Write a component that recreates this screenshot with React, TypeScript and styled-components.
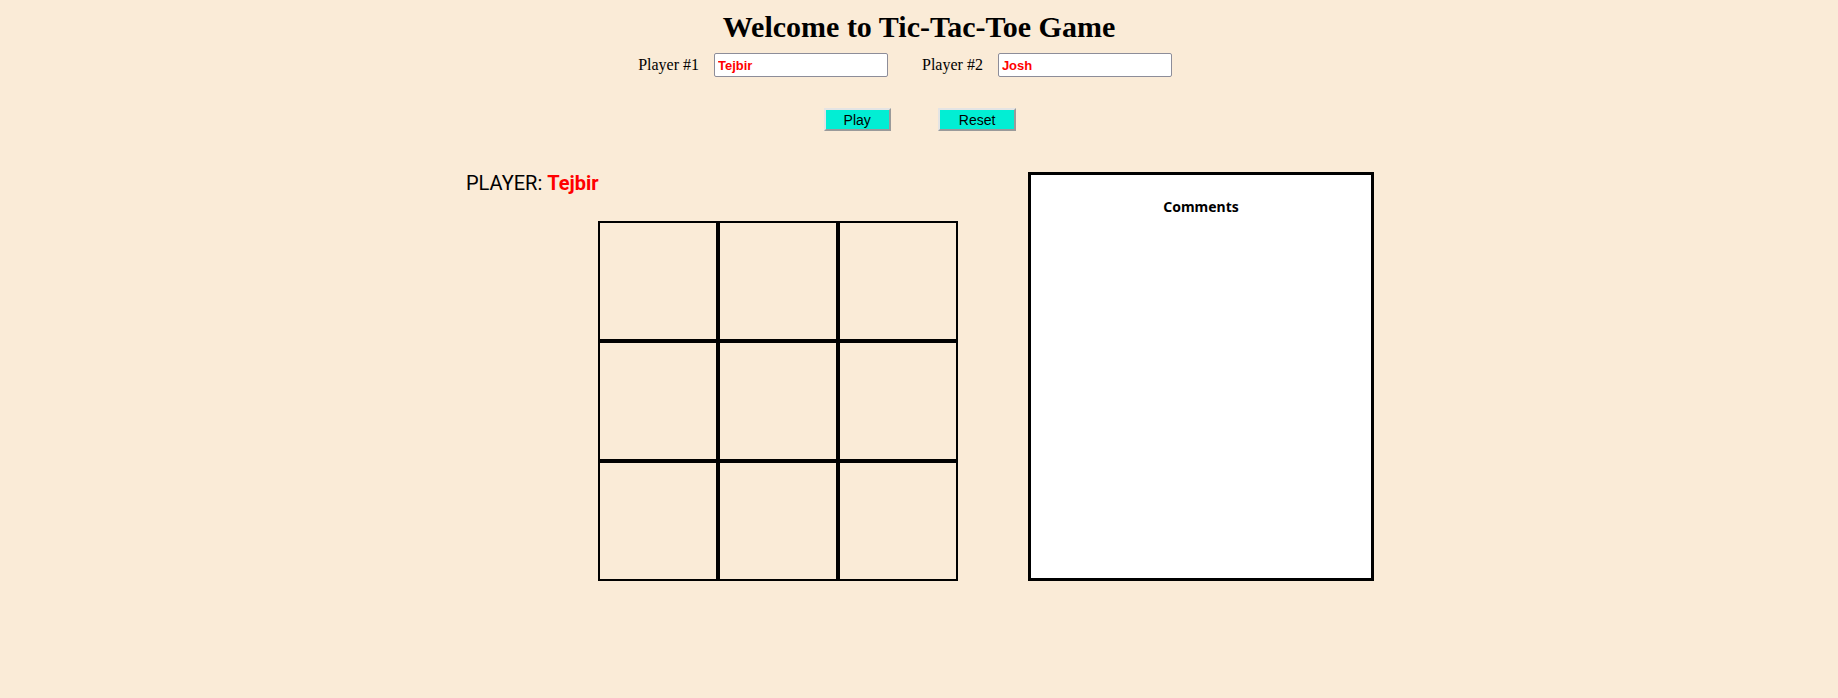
import styled, { createGlobalStyle } from "styled-components";

const GlobalStyle = createGlobalStyle`
  html,
  body {
    margin: 0;
    padding: 0;
    background-color: #faebd7;
  }
  body {
    font-family: "Liberation Serif", "Times New Roman", serif;
    color: #000;
  }
`;

const Page = styled.div`
  width: 100%;
  min-height: 698px;
  padding-top: 9px;
  box-sizing: border-box;
`;

const Title = styled.h1`
  margin: 0;
  text-align: center;
  font-family: "Liberation Serif", serif;
  font-size: 30px;
  line-height: 35px;
  font-weight: 700;
`;

const PlayersRow = styled.div`
  display: flex;
  justify-content: center;
  align-items: center;
  margin-top: 9px;
  padding-right: 28px;
`;

const PlayerLabel = styled.label`
  font-family: "Liberation Serif", serif;
  font-size: 16px;
  margin-right: 15px;
`;

const NameInput = styled.input<{ $gap?: number }>`
  width: 174px;
  height: 24px;
  box-sizing: border-box;
  border: 1px solid #8d8d99;
  border-radius: 2px;
  background: #fff;
  padding: 0 3px;
  font-family: "Liberation Sans", Arial, sans-serif;
  font-size: 13px;
  font-weight: 700;
  color: #ff0000;
  outline: none;
  margin-right: ${(p) => p.$gap ?? 0}px;
`;

const ButtonRow = styled.div`
  display: flex;
  justify-content: center;
  gap: 47px;
  margin-top: 31px;
  padding-left: 2px;
`;

const ActionButton = styled.button<{ $pad: number }>`
  height: 23px;
  padding: 0 ${(p) => p.$pad}px;
  box-sizing: border-box;
  background-color: #02eed4;
  border-width: 2px;
  border-style: solid;
  border-color: #e4e4e4 #9a9a9a #9a9a9a #e4e4e4;
  font-family: "Liberation Sans", Arial, sans-serif;
  font-size: 14px;
  color: #000;
  cursor: pointer;
`;

const GameArea = styled.div`
  display: flex;
  justify-content: center;
  gap: 70px;
  margin-top: 41px;
  padding-left: 2px;
`;

const BoardColumn = styled.div`
  width: 492px;
  display: flex;
  flex-direction: column;
`;

const TurnText = styled.div`
  font-family: Roboto, "Liberation Sans", sans-serif;
  font-size: 20px;
  line-height: 23px;
  color: #000;
`;

const TurnName = styled.span`
  color: #ff0000;
  font-weight: 700;
`;

const Board = styled.div`
  display: grid;
  grid-template-columns: repeat(3, 120px);
  grid-template-rows: repeat(3, 120px);
  margin-top: 26px;
  margin-left: 132px;
`;

const Cell = styled.div`
  box-sizing: border-box;
  border: 2px solid #000;
  background: transparent;
`;

const CommentsBox = styled.div`
  width: 346px;
  height: 409px;
  box-sizing: border-box;
  border: 3px solid #000;
  background: #fff;
  padding-top: 22px;
`;

const CommentsTitle = styled.h4`
  margin: 0;
  text-align: center;
  font-family: "Comic Sans MS", "Noto Sans", sans-serif;
  font-size: 14px;
  font-weight: 700;
`;

export default function App() {
  const cells = Array.from({ length: 9 });
  return (
    <Page>
      <GlobalStyle />
      <Title>Welcome to Tic-Tac-Toe Game</Title>
      <PlayersRow>
        <PlayerLabel>Player #1</PlayerLabel>
        <NameInput defaultValue="Tejbir" $gap={34} />
        <PlayerLabel>Player #2</PlayerLabel>
        <NameInput defaultValue="Josh" />
      </PlayersRow>
      <ButtonRow>
        <ActionButton $pad={18}>Play</ActionButton>
        <ActionButton $pad={19}>Reset</ActionButton>
      </ButtonRow>
      <GameArea>
        <BoardColumn>
          <TurnText>
            PLAYER: <TurnName>Tejbir</TurnName>
          </TurnText>
          <Board>
            {cells.map((_, i) => (
              <Cell key={i} />
            ))}
          </Board>
        </BoardColumn>
        <CommentsBox>
          <CommentsTitle>Comments</CommentsTitle>
        </CommentsBox>
      </GameArea>
    </Page>
  );
}
